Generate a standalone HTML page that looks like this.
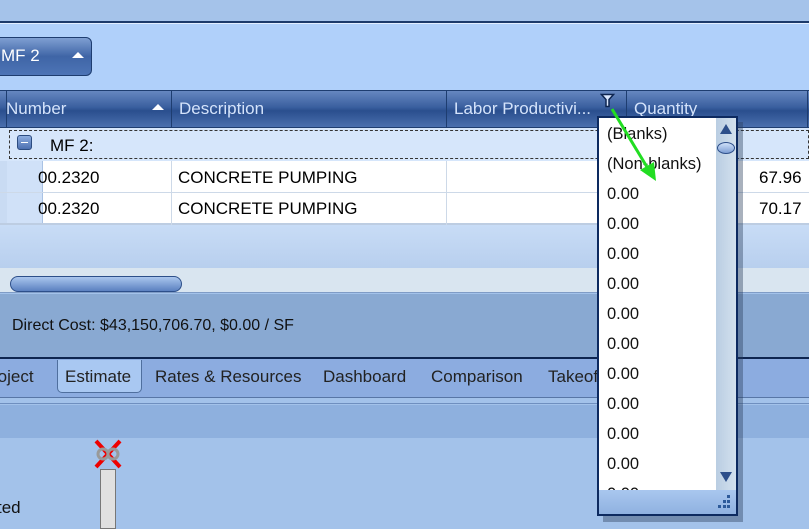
<!DOCTYPE html><html><head><style>
*{margin:0;padding:0;box-sizing:border-box}
body{width:809px;height:529px;overflow:hidden;position:relative;background:#a3c2ea;font-family:"Liberation Sans",sans-serif;font-size:17px}
.a{position:absolute}
.t{white-space:nowrap}
</style></head><body>
<div class="a" style="left:0;top:0;width:809px;height:21px;background:#a5c3ea"></div>
<div class="a" style="left:0;top:21px;width:809px;height:2px;background:#1c3a6a"></div>
<div class="a" style="left:0;top:23px;width:809px;height:67px;background:#b0d0fa;border-top:1px solid #e2eeff"></div>
<div class="a" style="left:-10px;top:37px;width:102px;height:39px;border:1px solid #1e3d70;border-radius:6px;background:linear-gradient(#7f9fd2,#3f65a6 50%,#4d74b6)"></div>
<div class="a t" style="left:1px;top:46px;color:#fff;font-size:17px">MF 2</div>
<div class="a" style="left:72px;top:52px;width:0;height:0;border-left:6px solid transparent;border-right:6px solid transparent;border-bottom:6px solid #fff"></div>
<div class="a" style="left:0;top:90px;width:809px;height:38px;background:linear-gradient(#6687c0,#3a5f9f 45%,#2a4f8e 55%,#4a6fae);border-top:1px solid #1e3d70;border-bottom:1px solid #1e3d70"></div>
<div class="a" style="left:6px;top:91px;width:1px;height:36px;background:#1e3d70"></div>
<div class="a" style="left:171px;top:91px;width:1px;height:36px;background:#1e3d70"></div>
<div class="a" style="left:446px;top:91px;width:1px;height:36px;background:#1e3d70"></div>
<div class="a" style="left:626px;top:91px;width:1px;height:36px;background:#1e3d70"></div>
<div class="a" style="left:807px;top:91px;width:1px;height:36px;background:#1e3d70"></div>
<div class="a t" style="left:6px;top:99px;color:#d4e3fb;font-size:17px">Number</div>
<div class="a" style="left:152px;top:104px;border-left:6px solid transparent;border-right:6px solid transparent;border-bottom:6px solid #fff"></div>
<div class="a t" style="left:179px;top:99px;color:#d4e3fb;font-size:17px">Description</div>
<div class="a t" style="left:454px;top:99px;color:#d4e3fb;font-size:17px">Labor Productivi...</div>
<div class="a t" style="left:634px;top:99px;color:#d4e3fb;font-size:17px">Quantity</div>
<svg class="a" style="left:600px;top:93px" width="16" height="16"><path d="M1.5 1.5h12l-4.5 5v7h-3v-7z" fill="#dbe8ff" stroke="#0e2550" stroke-width="1.5"/></svg>
<div class="a" style="left:0;top:128px;width:809px;height:33px;background:#d6e6fb"></div>
<div class="a" style="left:9px;top:130px;width:800px;height:29px;border:1px dashed #333"></div>
<div class="a" style="left:17px;top:135px;width:15px;height:15px;border:1px solid #2c4c80;border-radius:3px;background:linear-gradient(#8eaee0,#4c70b0)"></div>
<div class="a" style="left:21px;top:142px;width:7px;height:1px;background:#fff"></div>
<div class="a t" style="left:50px;top:136px">MF 2:</div>
<div class="a" style="left:0;top:161px;width:809px;height:64px;background:#fff"></div>
<div class="a" style="left:0;top:161px;width:9px;height:64px;background:#c9dbf3"></div>
<div class="a" style="left:7px;top:161px;width:36px;height:64px;background:#d0e1f8;border-right:1px solid #a9c2e4"></div>
<div class="a" style="left:0;top:192px;width:809px;height:1px;background:#cdd9e8"></div>
<div class="a" style="left:0;top:223px;width:809px;height:2px;background:#bdcde2"></div>
<div class="a" style="left:171px;top:161px;width:1px;height:64px;background:#cdd9e8"></div>
<div class="a" style="left:446px;top:161px;width:1px;height:64px;background:#cdd9e8"></div>
<div class="a t" style="left:38px;top:168px">00.2320</div>
<div class="a t" style="left:178px;top:168px">CONCRETE PUMPING</div>
<div class="a t" style="left:38px;top:199px">00.2320</div>
<div class="a t" style="left:178px;top:199px">CONCRETE PUMPING</div>
<div class="a t" style="left:759px;top:168px">67.96</div>
<div class="a t" style="left:759px;top:199px">70.17</div>
<div class="a" style="left:0;top:225px;width:809px;height:43px;background:linear-gradient(#c8dcf6,#b8cfee)"></div>
<div class="a" style="left:0;top:268px;width:809px;height:25px;background:#d9e5f0;border-bottom:1px solid #7f9cc6"></div>
<div class="a" style="left:10px;top:276px;width:172px;height:16px;border:1px solid #2d4f8a;border-radius:8px;background:linear-gradient(#aac6ee,#5b81c0)"></div>
<div class="a" style="left:0;top:294px;width:809px;height:64px;background:#89a9d2"></div>
<div class="a t" style="left:12px;top:317px;font-size:16px;color:#111">Direct Cost: $43,150,706.70, $0.00 / SF</div>
<div class="a" style="left:0;top:357px;width:809px;height:2px;background:#0e2550"></div>
<div class="a" style="left:0;top:359px;width:809px;height:38px;background:#8cace0"></div>
<div class="a" style="left:57px;top:360px;width:85px;height:33px;background:#a9c8f2;border:1px solid #4f6f9e;border-top:none;border-radius:0 0 5px 5px"></div>
<div class="a t" style="left:-8px;top:367px;color:#222;font-size:17px">roject</div>
<div class="a t" style="left:65px;top:367px;color:#222;font-size:17px">Estimate</div>
<div class="a t" style="left:155px;top:367px;color:#222;font-size:17px">Rates &amp; Resources</div>
<div class="a t" style="left:323px;top:367px;color:#222;font-size:17px">Dashboard</div>
<div class="a t" style="left:431px;top:367px;color:#222;font-size:17px">Comparison</div>
<div class="a t" style="left:548px;top:367px;color:#222;font-size:17px">Takeoff</div>
<div class="a" style="left:0;top:397px;width:809px;height:1px;background:#5876a6"></div>
<div class="a" style="left:0;top:398px;width:809px;height:6px;background:#a3c2ea;border-bottom:1px solid #6f8fbf"></div>
<div class="a" style="left:0;top:405px;width:809px;height:33px;background:#8eb0de"></div>
<div class="a t" style="left:-3px;top:498px;color:#111;font-size:17px">ted</div>
<svg class="a" style="left:92px;top:439px" width="32" height="32"><line x1="4" y1="2" x2="28" y2="28" stroke="#e00" stroke-width="4"/><line x1="28" y1="2" x2="4" y2="28" stroke="#e00" stroke-width="4"/><circle cx="11" cy="15" r="5" fill="none" stroke="#999" stroke-width="3"/><circle cx="21" cy="15" r="5" fill="none" stroke="#999" stroke-width="3"/></svg>
<div class="a" style="left:100px;top:469px;width:16px;height:60px;background:#e0e0e0;border:1px solid #777"></div>
<div class="a" style="left:603px;top:122px;width:140px;height:400px;background:rgba(40,60,90,.4)"></div>
<div class="a" style="left:597px;top:116px;width:141px;height:400px;background:#fff;border:2px solid #0d2a60"></div>
<div class="a" style="left:716px;top:118px;width:20px;height:372px;background:linear-gradient(90deg,#b9cde2,#d3e1ee)"></div>
<div class="a" style="left:720px;top:124px;border-left:6px solid transparent;border-right:6px solid transparent;border-bottom:10px solid #2d4f8a"></div>
<div class="a" style="left:717px;top:142px;width:18px;height:12px;border:1px solid #2d4f8a;border-radius:50%;background:linear-gradient(#cfe0f8,#7d9ed4)"></div>
<div class="a" style="left:720px;top:472px;border-left:6px solid transparent;border-right:6px solid transparent;border-top:10px solid #2d4f8a"></div>
<div class="a" style="left:599px;top:490px;width:137px;height:24px;background:linear-gradient(#a9c7ef,#8fb1e0)"></div>
<svg class="a" style="left:714px;top:493px" width="20" height="18"><g fill="#2d5a9a"><rect x="13" y="2" width="3" height="3"/><rect x="9" y="7" width="3" height="3"/><rect x="13" y="7" width="3" height="3"/><rect x="4" y="12" width="3" height="3"/><rect x="9" y="12" width="3" height="3"/><rect x="13" y="12" width="3" height="3"/></g></svg>
<div class="a" style="left:599px;top:118px;width:117px;height:372px;overflow:hidden;font-size:16.5px;color:#111;line-height:30px;padding:1px 0 0 8px">(Blanks)<br>(Non-blanks)<br>0.00<br>0.00<br>0.00<br>0.00<br>0.00<br>0.00<br>0.00<br>0.00<br>0.00<br>0.00<br>0.00<br>0.00</div>
<svg class="a" style="left:600px;top:106px" width="70" height="80"><line x1="12" y1="3" x2="50" y2="66" stroke="#22dd22" stroke-width="3"/><path d="M56 75L40 64L54 56Z" fill="#22dd22"/></svg>
</body></html>
